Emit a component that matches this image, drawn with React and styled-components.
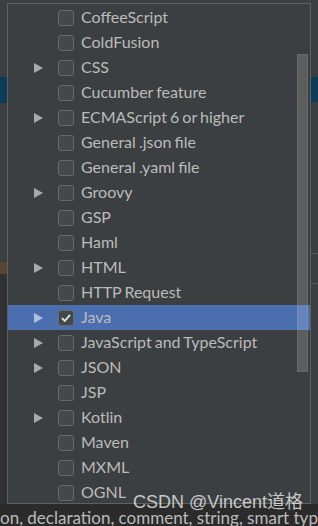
import React from "react";
import styled, { createGlobalStyle } from "styled-components";

const items = [
  { name: "CoffeeScript" },
  { name: "ColdFusion" },
  { name: "CSS", group: true },
  { name: "Cucumber feature" },
  { name: "ECMAScript 6 or higher", group: true },
  { name: "General .json file" },
  { name: "General .yaml file" },
  { name: "Groovy", group: true },
  { name: "GSP" },
  { name: "Haml" },
  { name: "HTML", group: true },
  { name: "HTTP Request" },
  { name: "Java", group: true, checked: true, selected: true },
  { name: "JavaScript and TypeScript", group: true },
  { name: "JSON", group: true },
  { name: "JSP" },
  { name: "Kotlin", group: true },
  { name: "Maven" },
  { name: "MXML" },
  { name: "OGNL" },
];

const GlobalStyle = createGlobalStyle`
  html, body {
    margin: 0;
    padding: 0;
    background: #2b2b2b;
  }
  body {
    font-family: Lato, "Open Sans", sans-serif;
  }
`;

const App = () => {
  return (
    <>
      <GlobalStyle />
      <Page>
        <Side>
          <SideBlock $h={74} />
          <SideBlock $h={26} $color="#0d3b5a" />
          <SideBlock $h={159} />
          <SideBlock $h={12} $color="#5a4437" />
          <SideBlock $h={230} $color="#2f3133" />
        </Side>
        <Popup>
          <List>
            {items.map((item) => (
              <Row key={item.name} $selected={item.selected}>
                <ArrowSlot>{item.group && <Arrow $selected={item.selected} />}</ArrowSlot>
                <Checkbox>
                  {item.checked && (
                    <svg width="12" height="12" viewBox="0 0 12 12">
                      <path d="M2 6.2 L4.8 9 L10 2.8" fill="none" stroke="#e8e8e8" strokeWidth="1.8" />
                    </svg>
                  )}
                </Checkbox>
                <Label>{item.name}</Label>
              </Row>
            ))}
          </List>
          <Thumb />
        </Popup>
        <Side>
          <SideBlock $h={74} />
          <SideBlock $h={25} $color="#0d3b5a" />
          <SideBlock $h={151} />
          <SideBlock $h={1} $color="#55585a" />
          <SideBlock $h={29} />
          <SideBlock $h={1} $color="#55585a" />
          <SideBlock $h={220} />
        </Side>
        <Status>on, declaration, comment, string, smart type</Status>
        <Watermark>CSDN @Vincent道格</Watermark>
      </Page>
    </>
  );
};

const Page = styled.div`
  position: relative;
  width: 318px;
  height: 526px;
  overflow: hidden;
  background: #3c3f41;
  display: grid;
  grid-template-columns: 7px 304px 7px;
  grid-template-rows: 501px 22px;
  padding-top: 3px;
  box-sizing: border-box;
`;

const Side = styled.div`
  display: flex;
  flex-direction: column;
  overflow: hidden;
`;

const SideBlock = styled.div`
  flex: none;
  height: ${(p) => p.$h}px;
  background: ${(p) => p.$color || "#3c3f41"};
`;

const Popup = styled.div`
  position: relative;
  border: 1px solid #5e6163;
  background: #3c3f41;
  overflow: hidden;
  box-sizing: border-box;
`;

const List = styled.ul`
  list-style: none;
  margin: 0;
  padding: 1px 0 0;
`;

const Row = styled.li`
  height: 25px;
  display: flex;
  align-items: center;
  padding-left: 26px;
  background: ${(p) => (p.$selected ? "#4b6eaf" : "transparent")};
`;

const ArrowSlot = styled.div`
  width: 24px;
  height: 25px;
  display: flex;
  align-items: center;
`;

const Arrow = styled.span`
  width: 0;
  height: 0;
  border-top: 5px solid transparent;
  border-bottom: 5px solid transparent;
  border-left: 9px solid ${(p) => (p.$selected ? "#aebfdc" : "#a7a9ab")};
`;

const Checkbox = styled.span`
  width: 16px;
  height: 16px;
  box-sizing: border-box;
  border: 1px solid #676a6c;
  border-radius: 3px;
  background: #43494a;
  margin-right: 7px;
  display: flex;
  align-items: center;
  justify-content: center;
`;

const Label = styled.span`
  color: #bbbbbb;
  font-size: 16px;
  word-spacing: -1px;
  white-space: nowrap;
  line-height: 24px;
  margin-top: -1px;
`;

const Thumb = styled.div`
  position: absolute;
  top: 50px;
  left: 289px;
  width: 11px;
  height: 318px;
  box-sizing: border-box;
  background: rgba(255, 255, 255, 0.16);
  border: 1px solid rgba(255, 255, 255, 0.08);
`;

const Status = styled.div`
  grid-column: 1 / 4;
  background: #2b2b2b;
  color: #bbbbbb;
  font-size: 17px;
  line-height: 22px;
  padding-top: 3px;
  white-space: nowrap;
  overflow: hidden;
`;

const Watermark = styled.div`
  position: absolute;
  left: 133px;
  top: 487px;
  color: rgba(255, 255, 255, 0.72);
  font-size: 18px;
  font-family: "Liberation Sans", "Noto Sans CJK SC", sans-serif;
  white-space: nowrap;
`;

export default App;
